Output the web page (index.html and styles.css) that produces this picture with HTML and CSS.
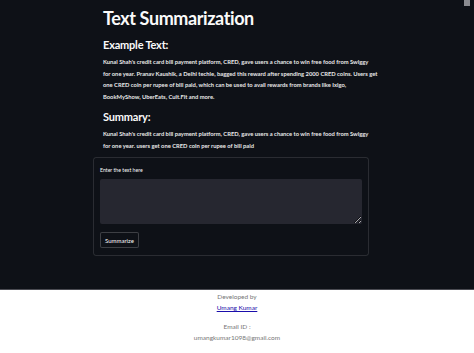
FILE: index.html
```html
<!DOCTYPE html>
<html lang="en">
<head>
	<meta charset="UTF-8">
	<title>Text Summarization</title>
	<link rel="stylesheet" href="styles.css">
</head>
<body>
	<div class="app">
		<div class="scroll-thumb"></div>
		<div class="main">
			<h1 class="title">Text Summarization</h1>
			<h3 class="sub">Example Text:</h3>
			<p class="txt">Kunal Shah's credit card bill payment platform, CRED, gave users a chance to win free food from Swiggy<br>for one year. Pranav Kaushik, a Delhi techie, bagged this reward after spending 2000 CRED coins. Users get<br>one CRED coin per rupee of bill paid, which can be used to avail rewards from brands like Ixigo,<br>BookMyShow, UberEats, Cult.Fit and more.</p>
			<h3 class="sub">Summary:</h3>
			<p class="txt">Kunal Shah's credit card bill payment platform, CRED, gave users a chance to win free food from Swiggy<br>for one year. users get one CRED coin per rupee of bill paid</p>
			<div class="form">
				<label class="lbl">Enter the text here</label>
				<textarea class="area"></textarea>
				<button class="btn">Summarize</button>
			</div>
		</div>
	</div>
	<div class="foot">
		<p>Developed by</p>
		<p><a href="#">Umang Kumar</a></p>
		<p class="gap">Email ID :</p>
		<p>umangkumar1098@gmail.com</p>
	</div>
</body>
</html>
```
FILE: styles.css
```css
body{
	margin: 0;
	font-family: "Lato", "Noto Sans", sans-serif;
	background-color: #fff;
}
/*深色主体*/
.app{
	height: 289px;
	background-color: #0e1117;
	border-bottom: 1px solid #4a4b52;
	position: relative;
	overflow: hidden;
}
.scroll-thumb{
	position: absolute;
	right: 4px;
	top: 0;
	width: 6px;
	height: 6px;
	background-color: #8a8b90;
}
.main{
	width: 276px;
	margin-left: 93px;
	padding-top: 5px;
	color: #fafafa;
}
.title{
	margin: 0 0 0 10px;
	font-size: 18px;
	line-height: 26px;
	font-weight: 700;
	letter-spacing: -0.4px;
}
.sub{
	margin: 7px 0 4px 10px;
	font-size: 11px;
	line-height: 14px;
	font-weight: 700;
	letter-spacing: -0.2px;
}
.txt{
	margin: 0 -20px 0 10px;
	font-size: 5.8px;
	line-height: 11.7px;
	font-weight: 700;
	color: #e8e8e8;
}
/*表单*/
.form{
	box-sizing: border-box;
	margin-top: 6px;
	border: 1px solid rgba(250,250,250,0.12);
	border-radius: 3px;
	padding: 8px 6px 7px 6px;
	display: flex;
	flex-direction: column;
	align-items: flex-start;
}
.lbl{
	font-size: 5.2px;
	line-height: 8px;
	margin-bottom: 5px;
}
.area{
	width: 262px;
	height: 45px;
	box-sizing: border-box;
	background-color: #262730;
	border: none;
	border-radius: 2px;
	margin: 0;
}
.btn{
	margin-top: 8px;
	height: 16px;
	padding: 0 4px;
	font-family: "Lato", sans-serif;
	font-size: 6px;
	color: #fafafa;
	background-color: #0e1117;
	border: 1px solid rgba(250,250,250,0.2);
	border-radius: 2px;
}
/*页脚*/
.foot{
	text-align: center;
	padding-top: 1px;
	font-size: 6.5px;
	color: #777;
}
.foot p{
	margin: 0;
	line-height: 11px;
}
.foot .gap{
	margin-top: 8px;
}
.foot a{
	color: #1a0dab;
}
```
